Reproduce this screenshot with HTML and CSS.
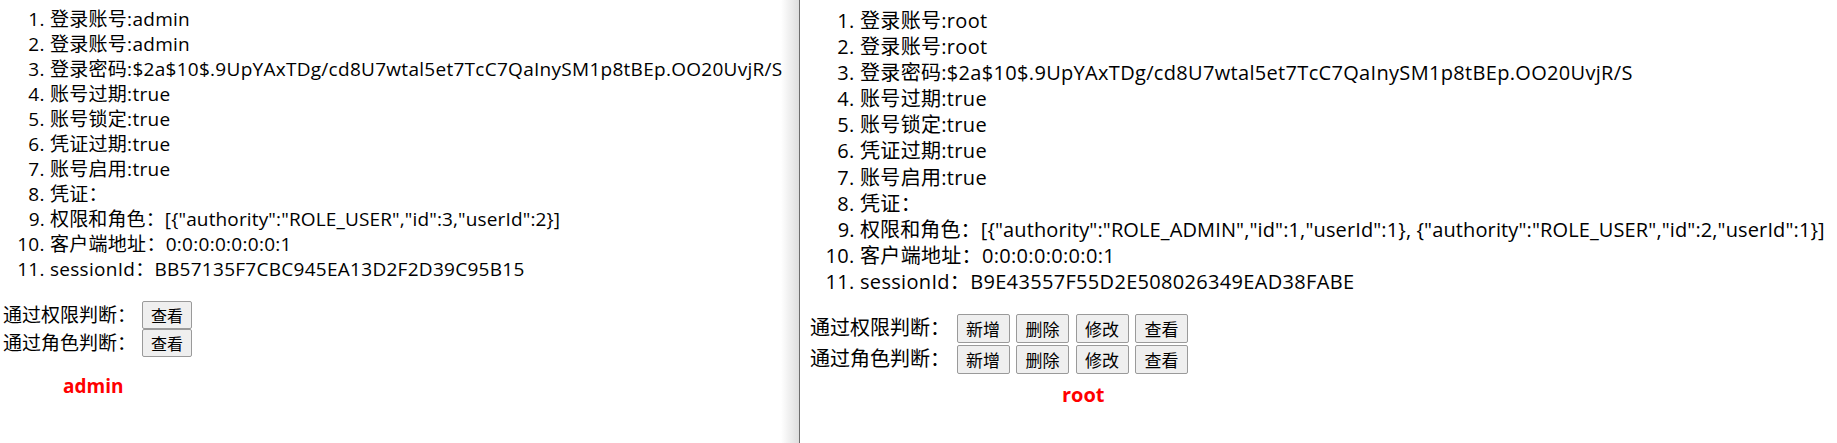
FILE: index.html
```html
<!DOCTYPE html>
<html lang="zh-CN">
<head>
<meta charset="utf-8">
<title>用户信息</title>
<link rel="stylesheet" href="styles.css">
</head>
<body>
<div class="screen">
  <section class="pane pane-left">
    <ol class="info">
      <li>登录账号:admin</li>
      <li>登录账号:admin</li>
      <li>登录密码:$2a$10$.9UpYAxTDg/cd8U7wtal5et7TcC7QaInySM1p8tBEp.OO20UvjR/S</li>
      <li>账号过期:true</li>
      <li>账号锁定:true</li>
      <li>凭证过期:true</li>
      <li>账号启用:true</li>
      <li>凭证：</li>
      <li class="roles">权限和角色：[{"authority":"ROLE_USER","id":3,"userId":2}]</li>
      <li>客户端地址：0:0:0:0:0:0:0:1</li>
      <li>sessionId：BB57135F7CBC945EA13D2F2D39C95B15</li>
    </ol>
    <div class="checks">
      <div class="check-row"><span class="check-label">通过权限判断：</span><button class="btn">查看</button></div>
      <div class="check-row"><span class="check-label">通过角色判断：</span><button class="btn">查看</button></div>
    </div>
    <div class="user-name">admin</div>
  </section>
  <section class="pane pane-right">
    <ol class="info">
      <li>登录账号:root</li>
      <li>登录账号:root</li>
      <li>登录密码:$2a$10$.9UpYAxTDg/cd8U7wtal5et7TcC7QaInySM1p8tBEp.OO20UvjR/S</li>
      <li>账号过期:true</li>
      <li>账号锁定:true</li>
      <li>凭证过期:true</li>
      <li>账号启用:true</li>
      <li>凭证：</li>
      <li class="roles">权限和角色：[{"authority":"ROLE_ADMIN","id":1,"userId":1}, {"authority":"ROLE_USER","id":2,"userId":1}]</li>
      <li>客户端地址：0:0:0:0:0:0:0:1</li>
      <li>sessionId：B9E43557F55D2E508026349EAD38FABE</li>
    </ol>
    <div class="checks">
      <div class="check-row"><span class="check-label">通过权限判断：</span><button class="btn">新增</button><button class="btn">删除</button><button class="btn">修改</button><button class="btn">查看</button></div>
      <div class="check-row"><span class="check-label">通过角色判断：</span><button class="btn">新增</button><button class="btn">删除</button><button class="btn">修改</button><button class="btn">查看</button></div>
    </div>
    <div class="user-name">root</div>
  </section>
</div>
</body>
</html>
```
FILE: styles.css
```css
html, body {
  margin: 0;
  padding: 0;
  background: #ffffff;
}

body {
  font-family: "Open Sans", "Noto Sans CJK SC", sans-serif;
  color: #000000;
}

.screen {
  display: flex;
  height: 443px;
  overflow: hidden;
}

.pane {
  box-sizing: border-box;
  height: 443px;
  overflow: hidden;
  white-space: nowrap;
}

.pane-left {
  flex: 0 0 800px;
  padding: 7px 0 0 3px;
  font-size: 19px;
  line-height: 25px;
  border-right: 1px solid #6e6e6e;
  background: linear-gradient(to right, #ffffff calc(100% - 18px), #dedede 100%);
}

.pane-right {
  flex: 1 1 auto;
  padding: 8px 0 0 10px;
  font-size: 20px;
  line-height: 26.1px;
}

.info {
  margin: 0;
  padding: 0 0 0 47px;
  letter-spacing: 0.28px;
}

.info .roles {
  letter-spacing: 0.14px;
}

.pane-right .info {
  padding-left: 50px;
  letter-spacing: 0.32px;
}

.pane-right .info .roles {
  letter-spacing: 0.12px;
}

.checks {
  margin-top: 19px;
}

.pane-right .checks {
  margin-top: 18px;
}

.check-row {
  display: flex;
  align-items: center;
  gap: 6px;
  height: 28px;
}

.pane-right .check-row {
  height: 31px;
  gap: 6.5px;
}

.check-label {
  margin-right: 0;
}

.btn {
  box-sizing: border-box;
  height: 28px;
  padding: 0 8px;
  font-family: "Noto Sans CJK SC", sans-serif;
  font-size: 16px;
  line-height: 1;
  color: #000000;
  background: #efefef;
  border: 1px solid #9a9a9a;
  border-radius: 2px;
}

.pane-right .btn {
  height: 29.7px;
  padding: 0 8.5px;
  font-size: 17px;
}

.user-name {
  margin: 17px 0 0 60px;
  color: #ff0000;
  font-weight: 700;
}

.pane-right .user-name {
  margin: 7px 0 0 252px;
}
```
